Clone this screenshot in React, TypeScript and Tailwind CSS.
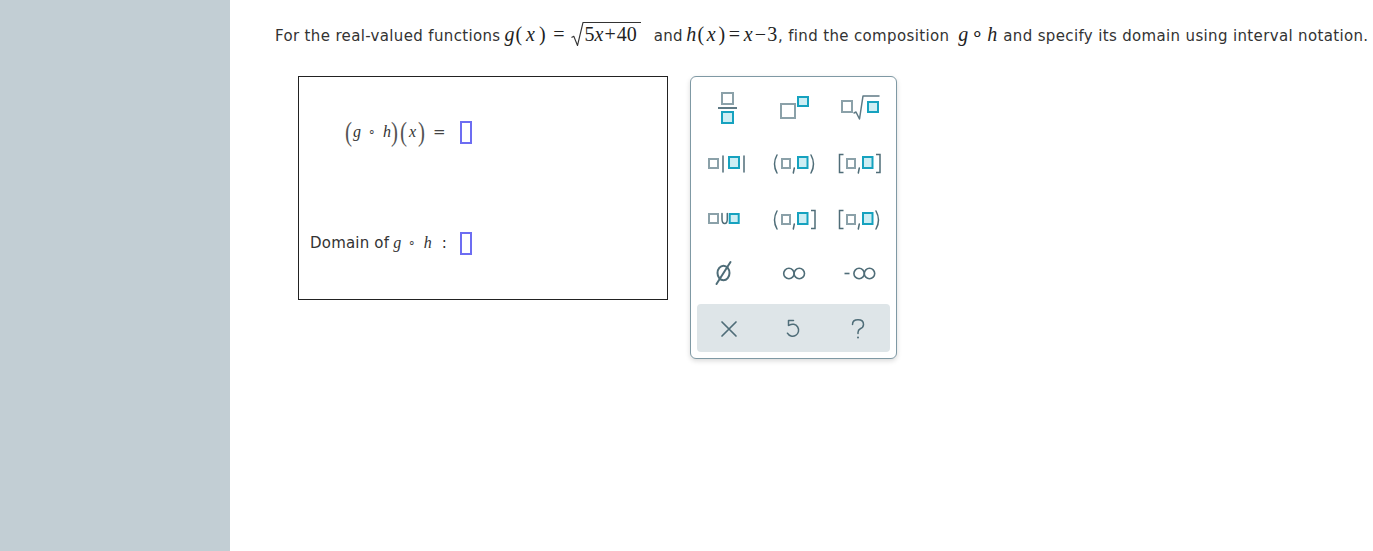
import React from "react";

const G = "#8ba1a9";
const T = "#16a2bf";
const TF = "#cdeef4";
const D = "#4f6d78";

function Ico({ children, w = 56, h = 40 }: { children: React.ReactNode; w?: number; h?: number }) {
  return (
    <svg width={w} height={h} viewBox={`0 0 ${w} ${h}`} fill="none" strokeLinecap="round" strokeLinejoin="round">
      {children}
    </svg>
  );
}

const GBox = (p: { x: number; y: number; w: number; h: number }) => (
  <rect x={p.x} y={p.y} width={p.w} height={p.h} stroke={G} strokeWidth={2} fill="white" strokeLinejoin="miter" />
);
const TBox = (p: { x: number; y: number; w: number; h: number }) => (
  <rect x={p.x} y={p.y} width={p.w} height={p.h} stroke={T} strokeWidth={2} fill={TF} strokeLinejoin="miter" />
);

const Frac = () => (
  <Ico>
    <GBox x={21} y={8} w={11} h={11} />
    <line x1={17} y1={23} x2={36} y2={23} stroke="#5f7a85" strokeWidth={2} strokeLinecap="butt" />
    <TBox x={21} y={27} w={11} h={11} />
  </Ico>
);
const Pow = () => (
  <Ico>
    <GBox x={16} y={19} w={14} h={14} />
    <TBox x={33} y={12} w={10} h={9} />
  </Ico>
);
const Sqrt = () => (
  <Ico>
    <GBox x={12} y={16} w={10} h={11} />
    <path d="M24 28 L26 27 L29.5 34 L33 11 H49" stroke="#5f7a85" strokeWidth={1.5} />
    <TBox x={38} y={17} w={10} h={10} />
  </Ico>
);
const Abs = () => (
  <Ico>
    <GBox x={8} y={18} w={9} h={9} />
    <line x1={22} y1={15} x2={22} y2={31} stroke={D} strokeWidth={1.5} />
    <TBox x={28} y={16} w={10} h={11} />
    <line x1={43} y1={15} x2={43} y2={31} stroke={D} strokeWidth={1.5} />
  </Ico>
);

function Interval({ left, right }: { left: "(" | "["; right: ")" | "]" }) {
  return (
    <Ico>
      {left === "(" ? (
        <path d="M12 14 Q7 23 12 32" stroke={D} strokeWidth={1.5} />
      ) : (
        <path d="M13.5 13.5 H9.5 V31.5 H13.5" stroke={D} strokeWidth={1.5} strokeLinejoin="miter" strokeLinecap="butt" />
      )}
      <GBox x={17} y={18} w={8} h={9} />
      <path d="M29.3 27 L28.3 32" stroke={D} strokeWidth={1.5} />
      <TBox x={33} y={16} w={9.5} h={11} />
      {right === ")" ? (
        <path d="M46 14 Q51 23 46 32" stroke={D} strokeWidth={1.5} />
      ) : (
        <path d="M46 13.5 H50 V31.5 H46" stroke={D} strokeWidth={1.5} strokeLinejoin="miter" strokeLinecap="butt" />
      )}
    </Ico>
  );
}

const Union = () => (
  <Ico>
    <GBox x={8} y={17} w={9} h={9} />
    <path d="M21 16.5 V22 Q21 26.5 23.7 26.5 Q26.3 26.5 26.3 22 V16.5" stroke={D} strokeWidth={1.5} />
    <TBox x={28.7} y={17} w={9} h={9} />
  </Ico>
);
const Empty = () => (
  <Ico>
    <ellipse cx={22.5} cy={20} rx={6} ry={7.3} stroke={D} strokeWidth={2} />
    <path d="M15.5 31 L29.5 9" stroke={D} strokeWidth={2} />
  </Ico>
);
const Inf = () => (
  <Ico>
    <circle cx={23.9} cy={20.5} r={5.2} stroke={D} strokeWidth={1.6} />
    <circle cx={34.3} cy={20.5} r={5.2} stroke={D} strokeWidth={1.6} />
  </Ico>
);
const NegInf = () => (
  <Ico>
    <line x1={14.5} y1={20.5} x2={19.5} y2={20.5} stroke={D} strokeWidth={1.6} strokeLinecap="butt" />
    <circle cx={29.1} cy={20.5} r={5.2} stroke={D} strokeWidth={1.6} />
    <circle cx={39.5} cy={20.5} r={5.2} stroke={D} strokeWidth={1.6} />
  </Ico>
);

const Times = () => (
  <Ico w={24} h={24}>
    <path d="M5 5 L19 19 M19 5 L5 19" stroke={D} strokeWidth={1.7} />
  </Ico>
);
const Undo = () => (
  <Ico w={24} h={24}>
    <path d="M12.5 3.5 H7.5 V8.5" stroke={D} strokeWidth={1.5} />
    <path d="M8.3 8.2 A6 6 0 1 1 6.4 16.2" stroke={D} strokeWidth={1.5} />
  </Ico>
);
const Help = () => (
  <Ico w={24} h={24}>
    <path d="M6.5 7.5 Q6.5 2.8 12 2.8 Q17.5 2.8 17.5 7.5 Q17.5 10.3 14.3 11.8 Q12 12.9 12 15.5 V16.5" stroke={D} strokeWidth={1.5} />
    <circle cx={12} cy={20.5} r={1} fill={D} />
  </Ico>
);

function Cell({ children }: { children: React.ReactNode }) {
  return <div className="flex h-[56px] items-center justify-center">{children}</div>;
}

function InputBox() {
  return <span className="inline-block h-[23px] w-[12px] border-2 border-[#6d6df2]" />;
}

const M = "inline-block text-center font-['Liberation_Serif',serif] text-[20px] leading-[26px] text-[#222]";
const mi = "font-['Liberation_Serif',serif] italic";
const mn = "font-['Liberation_Serif',serif]";

export default function App() {
  return (
    <div className="flex h-[551px] w-full bg-white font-['DejaVu_Sans',sans-serif] text-[#333]">
      <aside className="h-full w-[230px] shrink-0 bg-[#c2ced4]" />
      <main className="flex-1">
        <p className="mt-[21px] h-[26px] whitespace-nowrap pl-[45px] text-[15px] leading-[26px] tracking-[0.35px]">
          <span>For the real-valued functions</span>
          <span className={`${M} ml-[4px] w-[10px] italic`}>g</span>
          <span className={`${M} w-[9px]`}>(</span>
          <span className={`${M} w-[14px] italic`}>x</span>
          <span className={`${M} w-[10px]`}>)</span>
          <span className={`${M} w-[23px] font-['DejaVu_Serif',serif] text-[17px]`}>=</span>
          <span className="inline-flex items-stretch align-[-6px]">
            <svg width="13" height="25" viewBox="0 0 13 25" fill="none">
              <path d="M0.5 15.5 L2.8 14.3 L6.5 23.5 L12 0.5 H13" stroke="#333" strokeWidth="1.1" strokeLinejoin="round" />
            </svg>
            <span className={`${mn} border-t-[1.1px] border-[#333] pl-[1px] pr-[4px] text-[20px] leading-[23px] tracking-normal text-[#222]`}>
              5<span className="italic">x</span>
              <span className="mx-[1px]">+</span>40
            </span>
          </span>
          <span className="ml-[13px]">and</span>
          <span className={`${M} ml-[3px] w-[11px] italic`}>h</span>
          <span className={`${M} w-[8px]`}>(</span>
          <span className={`${M} w-[13px] italic`}>x</span>
          <span className={`${M} w-[8px]`}>)</span>
          <span className={`${M} w-[17px] font-['DejaVu_Serif',serif] text-[16px]`}>=</span>
          <span className={`${M} w-[11px] italic`}>x</span>
          <span className={`${M} w-[13px] font-['DejaVu_Serif',serif] text-[16px]`}>−</span>
          <span className={`${M} w-[11px]`}>3</span>
          <span>, find the composition</span>
          <span className={`${M} ml-[9px] w-[10px] italic`}>g</span>
          <span className={`${M} w-[19px] text-[15px]`}>∘</span>
          <span className={`${M} w-[10px] italic`}>h</span>
          <span className="ml-[6px]">and specify its domain using interval notation.</span>
        </p>

        <div className="mt-[29px] flex items-start pl-[68px]">
          <section className="h-[224px] w-[370px] border border-[#222]">
            <div className="grid grid-cols-[161px_auto] items-center pt-[43px]">
              <div className="flex h-[24px] items-center pl-[46px] text-[#444]">
                <span className={`${mn} inline-block scale-y-[1.25] text-[21px] leading-none text-[#555]`}>(</span>
                <span className={`${mi} ml-[1px] text-[16px] text-[#333]`}>g</span>
                <span className={`${mn} mx-[7px] text-[12px] text-[#444]`}>∘</span>
                <span className={`${mi} text-[16px] text-[#333]`}>h</span>
                <span className={`${mn} inline-block scale-y-[1.25] text-[21px] leading-none text-[#555]`}>)</span>
                <span className={`${mn} ml-[2px] inline-block scale-y-[1.25] text-[21px] leading-none text-[#555]`}>(</span>
                <span className={`${mi} mx-[2px] text-[16px] text-[#333]`}>x</span>
                <span className={`${mn} inline-block scale-y-[1.25] text-[21px] leading-none text-[#555]`}>)</span>
                <span className="ml-[8px] text-[15px] text-[#444]">=</span>
              </div>
              <div className="flex h-[24px] items-center">
                <InputBox />
              </div>
            </div>
            <div className="mt-[87px] grid grid-cols-[161px_auto] items-center">
              <div className="flex h-[24px] items-center whitespace-nowrap pl-[11px] text-[15px] tracking-[0.2px] text-[#333]">
                Domain of
                <span className={`${mi} ml-[4px] text-[16px] text-[#333]`}>g</span>
                <span className={`${mn} mx-[7px] text-[12px] text-[#444]`}>∘</span>
                <span className={`${mi} text-[16px] text-[#333]`}>h</span>
                <span className="ml-[10px]">:</span>
              </div>
              <div className="flex h-[24px] items-center">
                <InputBox />
              </div>
            </div>
          </section>

          <div className="ml-[22px] w-[207px] rounded-[6px] border border-[#7f99a4] bg-white px-[6px] pb-[6px] shadow-[0_2px_5px_rgba(0,0,0,0.15)]">
            <div className="grid grid-cols-3">
              <Cell><Frac /></Cell>
              <Cell><Pow /></Cell>
              <Cell><Sqrt /></Cell>
              <Cell><Abs /></Cell>
              <Cell><Interval left="(" right=")" /></Cell>
              <Cell><Interval left="[" right="]" /></Cell>
              <Cell><Union /></Cell>
              <Cell><Interval left="(" right="]" /></Cell>
              <Cell><Interval left="[" right=")" /></Cell>
              <Cell><Empty /></Cell>
              <Cell><Inf /></Cell>
              <Cell><NegInf /></Cell>
            </div>
            <div className="mt-[3px] grid h-[48px] grid-cols-3 rounded-[4px] bg-[#dee5e8]">
              <div className="flex items-center justify-center pt-[2px]"><Times /></div>
              <div className="flex items-center justify-center pt-[1px]"><Undo /></div>
              <div className="flex items-center justify-center pt-[2px]"><Help /></div>
            </div>
          </div>
        </div>
      </main>
    </div>
  );
}
